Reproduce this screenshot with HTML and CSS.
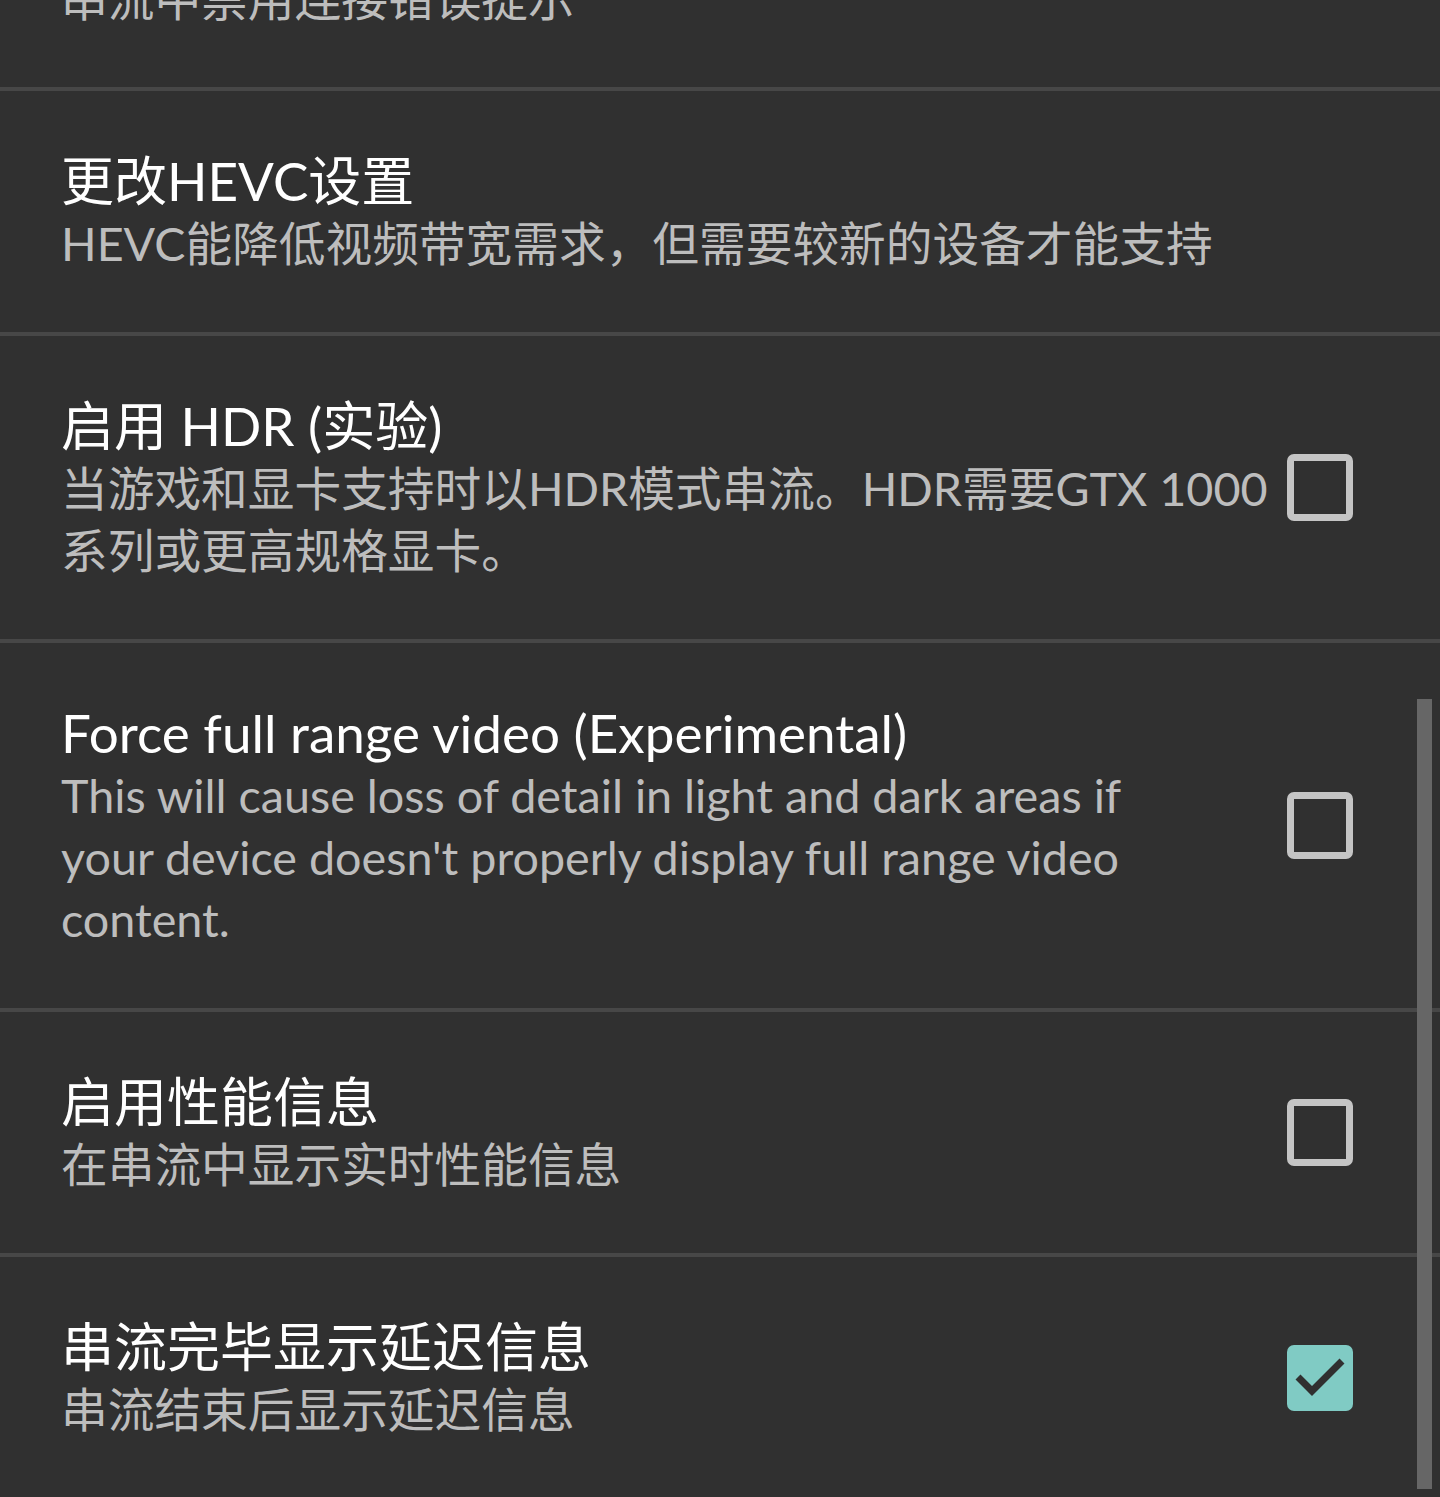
FILE: index.html
```html
<!DOCTYPE html>
<html lang="zh-CN">

<head>
    <meta charset="UTF-8">
    <meta name="viewport" content="width=device-width, initial-scale=1.0">
    <title>设置</title>

    <link rel="stylesheet" href="styles.css">
</head>

<body>
    <div class="list">
        <div class="pref">
            <div class="text">
                <div class="title">串流中禁用连接错误提示</div>
                <div class="summary">串流中禁用连接错误提示</div>
            </div>
        </div>

        <div class="pref">
            <div class="text">
                <div class="title">更改HEVC设置</div>
                <div class="summary">HEVC能降低视频带宽需求，但需要较新的设备才能支持</div>
            </div>
        </div>

        <div class="pref">
            <div class="text">
                <div class="title">启用 HDR (实验)</div>
                <div class="summary">当游戏和显卡支持时以HDR模式串流。HDR需要GTX 1000 系列或更高规格显卡。</div>
            </div>
            <div class="check"></div>
        </div>

        <div class="pref">
            <div class="text">
                <div class="title">Force full range video (Experimental)</div>
                <div class="summary en">This will cause loss of detail in light and dark areas if your device doesn't properly display full range video content.</div>
            </div>
            <div class="check"></div>
        </div>

        <div class="pref">
            <div class="text">
                <div class="title">启用性能信息</div>
                <div class="summary">在串流中显示实时性能信息</div>
            </div>
            <div class="check"></div>
        </div>

        <div class="pref">
            <div class="text">
                <div class="title">串流完毕显示延迟信息</div>
                <div class="summary">串流结束后显示延迟信息</div>
            </div>
            <div class="check checked">
                <svg viewBox="0 0 66 66" width="66" height="66" fill="none" stroke="#303030" stroke-width="7">
                    <polyline points="11 32 25 46 55 16"></polyline>
                </svg>
            </div>
        </div>
    </div>

    <div class="scrollbar"></div>
</body>

</html>
```

FILE: styles.css
```css
body {
    margin: 0;
    height: 1497px;
    overflow: hidden;
    background: #303030;
    font-family: 'Lato', 'Noto Sans CJK SC', sans-serif;
    position: relative;
}

.list {
    margin-top: -154px;
}

.pref {
    display: flex;
    align-items: center;
    padding: 58.5px 87px 58.5px 61px;
    border-bottom: 4px solid #474747;
}

.pref .text {
    flex: 1;
}

.title {
    color: #ffffff;
    font-size: 53px;
    line-height: 62px;
}

.summary {
    color: #bdbdbd;
    font-size: 46.7px;
    line-height: 62px;
}

.summary.en {
    padding-right: 160px;
}

.check {
    width: 52px;
    height: 53px;
    border: 7px solid #c4c4c4;
    border-radius: 7px;
}

.check.checked {
    width: 66px;
    height: 66px;
    border: none;
    background: #80cbc4;
}

.check svg {
    display: block;
}

.scrollbar {
    position: absolute;
    top: 699px;
    right: 8px;
    width: 15px;
    height: 790px;
    background: #666666;
}
```
